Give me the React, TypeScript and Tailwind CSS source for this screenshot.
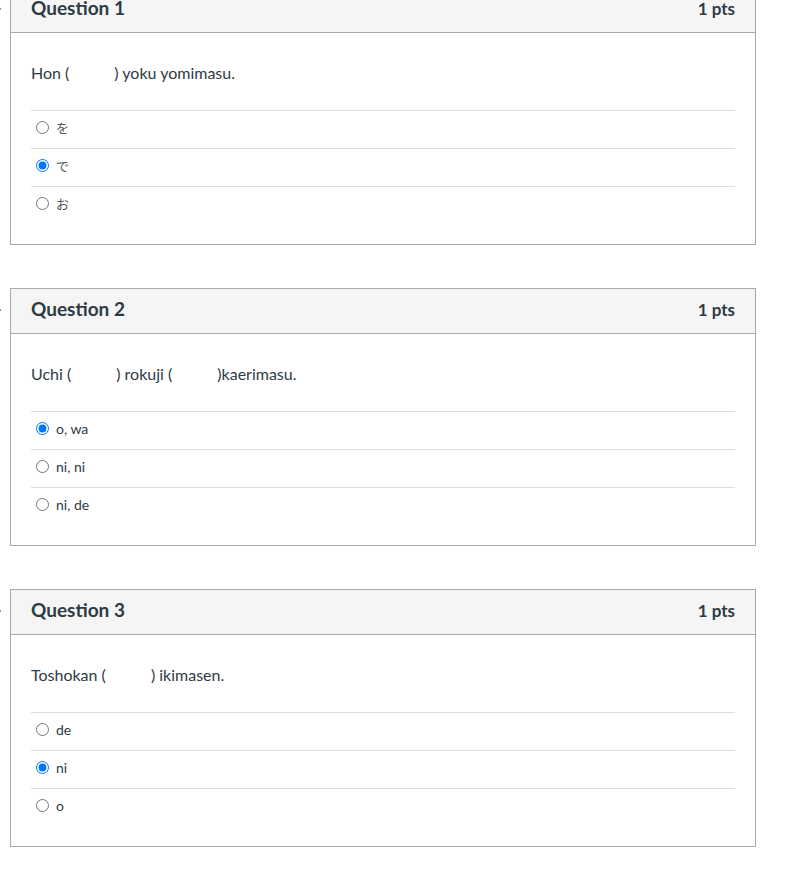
import React from 'react'

type Question = {
  title: string
  points: string
  parts: string[]
  options: string[]
  selected: number
  jp?: boolean
}

const questions: Question[] = [
  {
    title: 'Question 1',
    points: '1 pts',
    parts: ['Hon (', ') yoku yomimasu.'],
    options: ['を', 'で', 'お'],
    selected: 1,
    jp: true
  },
  {
    title: 'Question 2',
    points: '1 pts',
    parts: ['Uchi (', ') rokuji (', ')kaerimasu.'],
    options: ['o, wa', 'ni, ni', 'ni, de'],
    selected: 0
  },
  {
    title: 'Question 3',
    points: '1 pts',
    parts: ['Toshokan (', ') ikimasen.'],
    options: ['de', 'ni', 'o'],
    selected: 1
  }
]

const QuestionCard = ({ q, idx }: { q: Question; idx: number }) => {
  return (
    <div className="relative mb-[43px]">
      {/* little marker peeking from the left edge */}
      <div className="absolute left-[-10px] top-[21px] w-[1px] h-[2px] bg-[#6b9bd1]" />
      <div className="border border-[#a9a9a9] bg-white">
        <div className="h-[45px] bg-[#f5f5f5] border-b border-[#a9a9a9] flex items-center justify-between px-[20px] pb-[3px]">
          <span className="text-[19px] font-bold text-[#2d3b45]">{q.title}</span>
          <span className="text-[17px] font-bold text-[#2d3b45]">{q.points}</span>
        </div>
        <div className="px-[20px] pt-[30px] pb-[20px]">
          <p className="text-[16px] leading-[20px] text-[#2d3b45] mb-[27px]">
            {q.parts.map((p, i) => (
              <React.Fragment key={i}>
                {i > 0 && <span className="inline-block w-[45px]" />}
                {p}
              </React.Fragment>
            ))}
          </p>
          <div>
            {q.options.map((opt, i) => (
              <label key={i} className="h-[38px] border-t border-[#dddddd] flex items-center pb-[4px]">
                <input
                  type="radio"
                  name={`q${idx}`}
                  defaultChecked={i === q.selected}
                  className="w-[13px] h-[13px] ml-[5px] mr-[7px] my-0 accent-[#0075ff]"
                />
                <span
                  className={
                    q.jp
                      ? "text-[13px] text-[#555] font-['Noto_Sans_CJK_JP',sans-serif]"
                      : 'text-[14px] text-[#2d3b45]'
                  }
                >
                  {opt}
                </span>
              </label>
            ))}
          </div>
        </div>
      </div>
    </div>
  )
}

export default function App() {
  return (
    <div className="min-h-screen bg-white font-['Lato','Liberation_Sans',sans-serif] overflow-hidden">
      <div className="ml-[10px] w-[746px] mt-[-13px]">
        {questions.map((q, i) => (
          <QuestionCard key={i} q={q} idx={i} />
        ))}
      </div>
    </div>
  )
}
